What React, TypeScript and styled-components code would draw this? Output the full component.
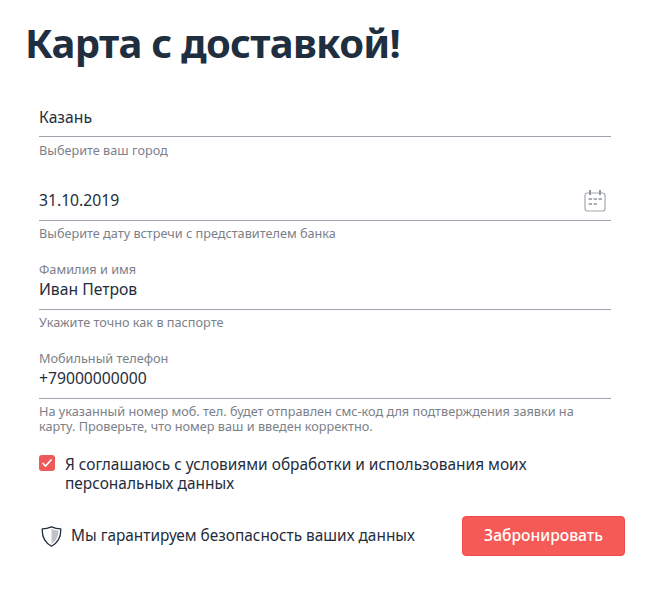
import React from 'react';
import styled, { createGlobalStyle } from 'styled-components';

const Global = createGlobalStyle`
  html, body { margin: 0; padding: 0; background: #fff; }
  body { font-family: "Noto Sans", "Open Sans", sans-serif; color: #1f2d3d; }
`;

const Page = styled.div`
  width: 649px;
  height: 614px;
  box-sizing: border-box;
  padding: 17px 24px 0 25px;
  overflow: hidden;
`;

const Title = styled.h1`
  margin: 0 0 14px;
  font-size: 40px;
  line-height: 52px;
  font-weight: 700;
  letter-spacing: -0.72px;
  color: #1f2f3f;
`;

const Form = styled.form`
  display: flex;
  flex-direction: column;
  padding-left: 14px;
`;

const Field = styled.div<{ $h: number }>`
  height: ${p => p.$h}px;
  width: 572px;
`;

const InputBox = styled.div`
  height: 54px;
  box-sizing: border-box;
  border-bottom: 1px solid #a0a4ae;
  display: flex;
  flex-direction: column;
  justify-content: flex-end;
  position: relative;
`;

const FloatLabel = styled.div`
  font-size: 12.7px;
  line-height: 16px;
  margin-bottom: 1px;
  color: #7c8089;
`;

const Value = styled.div<{ $tight?: boolean }>`
  font-size: 15.7px;
  line-height: 22px;
  margin-bottom: ${p => (p.$tight ? 8 : 9)}px;
  color: #1f2d3d;
`;

const Hint = styled.div<{ $tight?: boolean }>`
  font-size: 12.7px;
  line-height: 15px;
  margin-top: ${p => (p.$tight ? 6 : 5)}px;
  color: #7c8089;
`;

const CalendarWrap = styled.span`
  position: absolute;
  right: 5px;
  bottom: 8px;
  display: flex;
`;

const Consent = styled.label`
  display: flex;
  align-items: flex-start;
  gap: 10px;
  margin-top: 21px;
  width: 520px;
  font-size: 15.45px;
  line-height: 19px;
  color: #1f2d3d;
`;

const Check = styled.span`
  flex: none;
  width: 16px;
  height: 16px;
  border-radius: 3px;
  background: #ee5a5c;
  display: flex;
  align-items: center;
  justify-content: center;
`;

const Footer = styled.div`
  display: flex;
  align-items: center;
  justify-content: space-between;
  margin-top: 23px;
  width: 586px;
`;

const Secure = styled.div`
  display: flex;
  align-items: center;
  gap: 9px;
  padding-left: 2px;
  font-size: 15.4px;
  color: #1f2d3d;
`;

const SecureText = styled.span`
  margin-bottom: 2px;
`;

const Submit = styled.button`
  width: 163px;
  height: 40px;
  border: 1px solid #f04a4a;
  border-radius: 4px;
  background: #f65a57;
  color: #fff;
  font-family: inherit;
  font-size: 15.6px;
  font-weight: 500;
  padding: 0 0 2px;
`;

const fields = [
  { h: 84, first: true, value: 'Казань', hint: 'Выберите ваш город' },
  { h: 89, value: '31.10.2019', hint: 'Выберите дату встречи с представителем банка', date: true },
  { h: 89, label: 'Фамилия и имя', value: 'Иван Петров', hint: 'Укажите точно как в паспорте' },
  {
    h: 89,
    label: 'Мобильный телефон',
    value: '+79000000000',
    hint: 'На указанный номер моб. тел. будет отправлен смс-код для подтверждения заявки на карту. Проверьте, что номер ваш и введен корректно.',
  },
];

function Calendar() {
  return (
    <svg width="22" height="23" viewBox="0 0 22 23" fill="none">
      <rect x="1" y="4" width="20" height="18" rx="2.5" stroke="#a3aab0" strokeWidth="1.2" />
      <path d="M6 1v5M16 1v5" stroke="#8f969c" strokeWidth="2" />
      <path d="M4.500 10h3.500M9.500 10h3.500M14.500 10h3.500M4.500 15h3.500M9.500 15h3.500" stroke="#8f969c" strokeWidth="1.6" />
    </svg>
  );
}

function Shield() {
  return (
    <svg width="21" height="21" viewBox="0 0 21 21" fill="none">
      <path d="M10.500 .8c3 1.300 6 2 9.200 2 .5 7.500-2.400 13.800-9.200 17.400C3.700 16.600 .8 10.300 1.300 2.800c3.200 0 6.200-.7 9.200-2z" stroke="#1f2d3d" strokeWidth="1.3" strokeLinejoin="round" />
      <path d="M10.500 3c2.400 .9 4.600 1.500 7 1.600 0 5.500-2.200 10.600-7 13.400z" fill="#bfc3c6" />
    </svg>
  );
}

export default function App() {
  return (
    <Page>
      <Global />
      <Title>Карта с доставкой!</Title>
      <Form>
        {fields.map(f => (
          <Field key={f.value} $h={f.h}>
            <InputBox>
              {f.label && <FloatLabel>{f.label}</FloatLabel>}
              <Value $tight={f.first}>{f.value}</Value>
              {f.date && (
                <CalendarWrap>
                  <Calendar />
                </CalendarWrap>
              )}
            </InputBox>
            <Hint $tight={f.first}>{f.hint}</Hint>
          </Field>
        ))}
        <Consent>
          <Check>
            <svg width="12" height="10" viewBox="0 0 12 10" fill="none">
              <path d="M1.500 5l3 3 6-6.500" stroke="#fff" strokeWidth="1.6" />
            </svg>
          </Check>
          <span>Я соглашаюсь с условиями обработки и использования моих персональных данных</span>
        </Consent>
        <Footer>
          <Secure>
            <Shield />
            <SecureText>Мы гарантируем безопасность ваших данных</SecureText>
          </Secure>
          <Submit type="button">Забронировать</Submit>
        </Footer>
      </Form>
    </Page>
  );
}
